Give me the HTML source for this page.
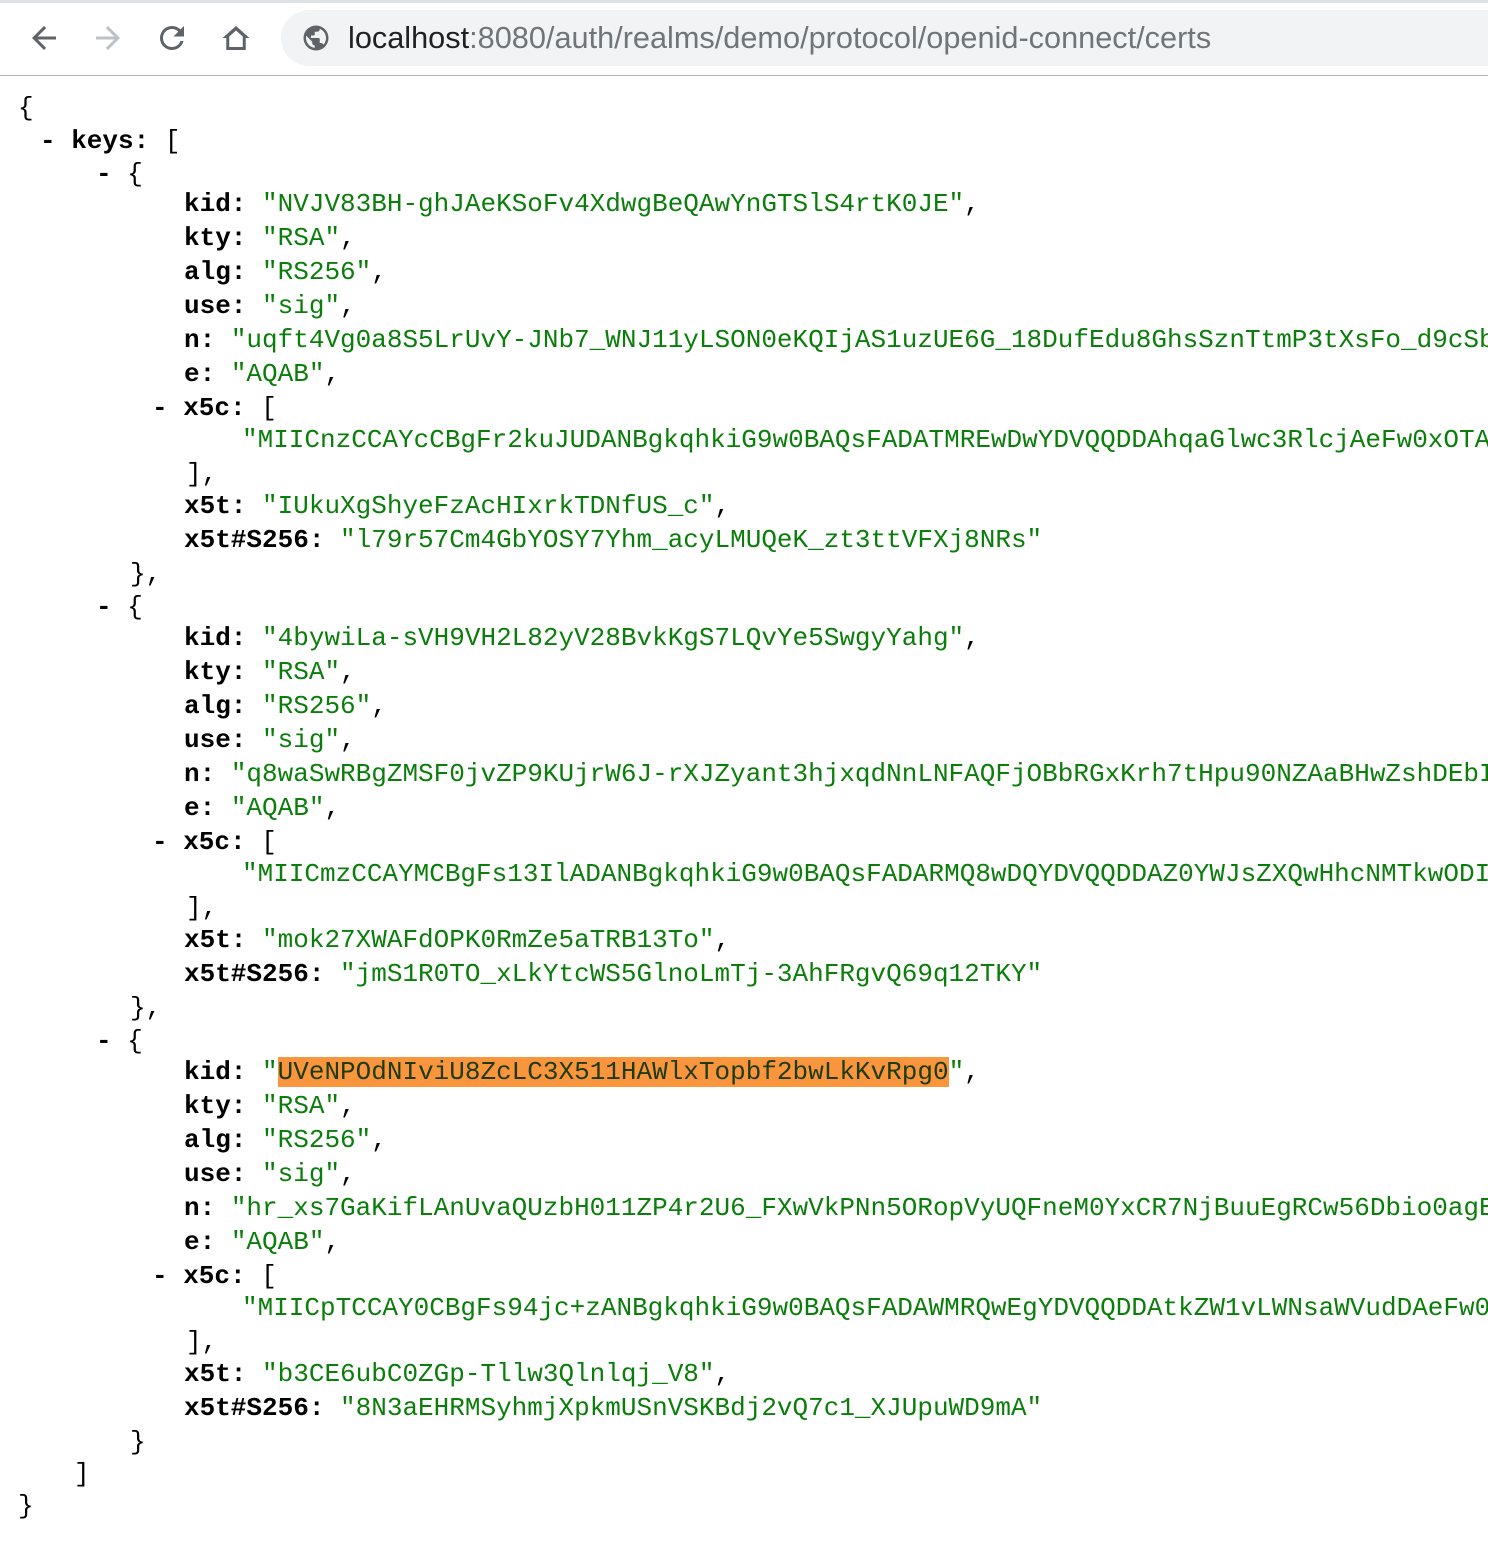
<!DOCTYPE html>
<html><head><meta charset="utf-8"><style>
body{margin:0;width:1488px;height:1546px;background:#fff;overflow:hidden;position:relative;font-family:"Liberation Mono",monospace}
.top{position:absolute;left:0;top:0;width:1488px;height:3px;background:#dee1e6}
.bar{position:absolute;left:0;top:75px;width:1488px;height:1px;background:#b5b5b5}
.url{position:absolute;left:281px;top:10px;width:1240px;height:56px;border-radius:28px;background:#f1f3f4}
.ut{position:absolute;left:348px;top:20px;font-family:"Liberation Sans",sans-serif;font-size:30.7px;color:#70757a;white-space:nowrap}
.ut b{font-weight:normal;color:#202124}
svg{position:absolute}
.l{position:absolute;white-space:pre;font-size:26px;line-height:33px;height:33px;color:#000}
.k{font-weight:bold}
.s{color:#0b7d0b}
.h{background:#f9953d;color:#1f3a0a}
</style></head><body>
<div class="top"></div>
<svg style="left:26px;top:20px" width="36" height="36" viewBox="0 0 24 24"><path d="M20 11H7.8l5.6-5.6L12 4l-8 8 8 8 1.4-1.4L7.8 13H20z" fill="#5f6368"/></svg>
<svg style="left:90px;top:20px" width="36" height="36" viewBox="0 0 24 24"><path d="M4 11h12.2l-5.6-5.6L12 4l8 8-8 8-1.4-1.4 5.6-5.6H4z" fill="#bdc1c6"/></svg>
<svg style="left:154px;top:20px" width="36" height="36" viewBox="0 0 24 24"><path d="M17.65 6.35A7.96 7.96 0 0 0 12 4a8 8 0 1 0 7.73 10h-2.08A6 6 0 1 1 12 6c1.66 0 3.14.69 4.22 1.78L13 11h7V4z" fill="#5f6368"/></svg>
<svg style="left:218px;top:20px" width="36" height="36" viewBox="0 0 24 24"><path d="M12 4L3 12h2.5v8h13v-8H21z M7.5 18v-7L12 7l4.5 4v7z" fill="#5f6368" fill-rule="evenodd"/></svg>
<div class="url"></div>
<svg style="left:301px;top:23px" width="30" height="30" viewBox="0 0 24 24"><circle cx="12" cy="12" r="10" fill="#5f6368"/><path d="M11 19.9A8 8 0 0 1 4.2 10.2L9 15v1a2 2 0 0 0 2 2zM17.9 17.4A2 2 0 0 0 16 16h-1v-3a1 1 0 0 0-1-1H8v-2h2a1 1 0 0 0 1-1V7h2a2 2 0 0 0 2-2v-.4a8 8 0 0 1 2.9 12.8z" fill="#f1f3f4"/></svg>
<div class="ut"><b>localhost</b>:8080/auth/realms/demo/protocol/openid-connect/certs</div>
<div class="bar"></div>

<div class="l" style="left:18px;top:92px">{</div>
<div class="l" style="left:40px;top:125px"><span class="k">- keys:</span> [</div>

<div class="l" style="left:96px;top:158px"><span class="k">-</span> {</div>
<div class="l" style="left:184px;top:188px"><span class="k">kid:</span> <span class="s">"NVJV83BH-ghJAeKSoFv4XdwgBeQAwYnGTSlS4rtK0JE"</span>,</div>
<div class="l" style="left:184px;top:222px"><span class="k">kty:</span> <span class="s">"RSA"</span>,</div>
<div class="l" style="left:184px;top:256px"><span class="k">alg:</span> <span class="s">"RS256"</span>,</div>
<div class="l" style="left:184px;top:290px"><span class="k">use:</span> <span class="s">"sig"</span>,</div>
<div class="l" style="left:184px;top:324px"><span class="k">n:</span> <span class="s">"uqft4Vg0a8S5LrUvY-JNb7_WNJ11yLSON0eKQIjAS1uzUE6G_18DufEdu8GhsSznTtmP3tXsFo_d9cSb</span></div>
<div class="l" style="left:184px;top:358px"><span class="k">e:</span> <span class="s">"AQAB"</span>,</div>
<div class="l" style="left:152px;top:392px"><span class="k">- x5c:</span> [</div>
<div class="l" style="left:242px;top:424px"><span class="s">"MIICnzCCAYcCBgFr2kuJUDANBgkqhkiG9w0BAQsFADATMREwDwYDVQQDDAhqaGlwc3RlcjAeFw0xOTA</span></div>
<div class="l" style="left:186px;top:458px">],</div>
<div class="l" style="left:184px;top:490px"><span class="k">x5t:</span> <span class="s">"IUkuXgShyeFzAcHIxrkTDNfUS_c"</span>,</div>
<div class="l" style="left:184px;top:524px"><span class="k">x5t#S256:</span> <span class="s">"l79r57Cm4GbYOSY7Yhm_acyLMUQeK_zt3ttVFXj8NRs"</span></div>
<div class="l" style="left:130px;top:558px">},</div>

<div class="l" style="left:96px;top:591px"><span class="k">-</span> {</div>
<div class="l" style="left:184px;top:622px"><span class="k">kid:</span> <span class="s">"4bywiLa-sVH9VH2L82yV28BvkKgS7LQvYe5SwgyYahg"</span>,</div>
<div class="l" style="left:184px;top:656px"><span class="k">kty:</span> <span class="s">"RSA"</span>,</div>
<div class="l" style="left:184px;top:690px"><span class="k">alg:</span> <span class="s">"RS256"</span>,</div>
<div class="l" style="left:184px;top:724px"><span class="k">use:</span> <span class="s">"sig"</span>,</div>
<div class="l" style="left:184px;top:758px"><span class="k">n:</span> <span class="s">"q8waSwRBgZMSF0jvZP9KUjrW6J-rXJZyant3hjxqdNnLNFAQFjOBbRGxKrh7tHpu90NZAaBHwZshDEbI</span></div>
<div class="l" style="left:184px;top:792px"><span class="k">e:</span> <span class="s">"AQAB"</span>,</div>
<div class="l" style="left:152px;top:826px"><span class="k">- x5c:</span> [</div>
<div class="l" style="left:242px;top:858px"><span class="s">"MIICmzCCAYMCBgFs13IlADANBgkqhkiG9w0BAQsFADARMQ8wDQYDVQQDDAZ0YWJsZXQwHhcNMTkwODI</span></div>
<div class="l" style="left:186px;top:892px">],</div>
<div class="l" style="left:184px;top:924px"><span class="k">x5t:</span> <span class="s">"mok27XWAFdOPK0RmZe5aTRB13To"</span>,</div>
<div class="l" style="left:184px;top:958px"><span class="k">x5t#S256:</span> <span class="s">"jmS1R0TO_xLkYtcWS5GlnoLmTj-3AhFRgvQ69q12TKY"</span></div>
<div class="l" style="left:130px;top:992px">},</div>

<div class="l" style="left:96px;top:1025px"><span class="k">-</span> {</div>
<div class="l" style="left:184px;top:1056px"><span class="k">kid:</span> <span class="s">"<span class="h">UVeNPOdNIviU8ZcLC3X511HAWlxTopbf2bwLkKvRpg0</span>"</span>,</div>
<div class="l" style="left:184px;top:1090px"><span class="k">kty:</span> <span class="s">"RSA"</span>,</div>
<div class="l" style="left:184px;top:1124px"><span class="k">alg:</span> <span class="s">"RS256"</span>,</div>
<div class="l" style="left:184px;top:1158px"><span class="k">use:</span> <span class="s">"sig"</span>,</div>
<div class="l" style="left:184px;top:1192px"><span class="k">n:</span> <span class="s">"hr_xs7GaKifLAnUvaQUzbH011ZP4r2U6_FXwVkPNn5ORopVyUQFneM0YxCR7NjBuuEgRCw56Dbio0agE</span></div>
<div class="l" style="left:184px;top:1226px"><span class="k">e:</span> <span class="s">"AQAB"</span>,</div>
<div class="l" style="left:152px;top:1260px"><span class="k">- x5c:</span> [</div>
<div class="l" style="left:242px;top:1292px"><span class="s">"MIICpTCCAY0CBgFs94jc+zANBgkqhkiG9w0BAQsFADAWMRQwEgYDVQQDDAtkZW1vLWNsaWVudDAeFw0</span></div>
<div class="l" style="left:186px;top:1326px">],</div>
<div class="l" style="left:184px;top:1358px"><span class="k">x5t:</span> <span class="s">"b3CE6ubC0ZGp-Tllw3Qlnlqj_V8"</span>,</div>
<div class="l" style="left:184px;top:1392px"><span class="k">x5t#S256:</span> <span class="s">"8N3aEHRMSyhmjXpkmUSnVSKBdj2vQ7c1_XJUpuWD9mA"</span></div>
<div class="l" style="left:130px;top:1426px">}</div>
<div class="l" style="left:74px;top:1458px">]</div>
<div class="l" style="left:18px;top:1490px">}</div>
</body></html>
